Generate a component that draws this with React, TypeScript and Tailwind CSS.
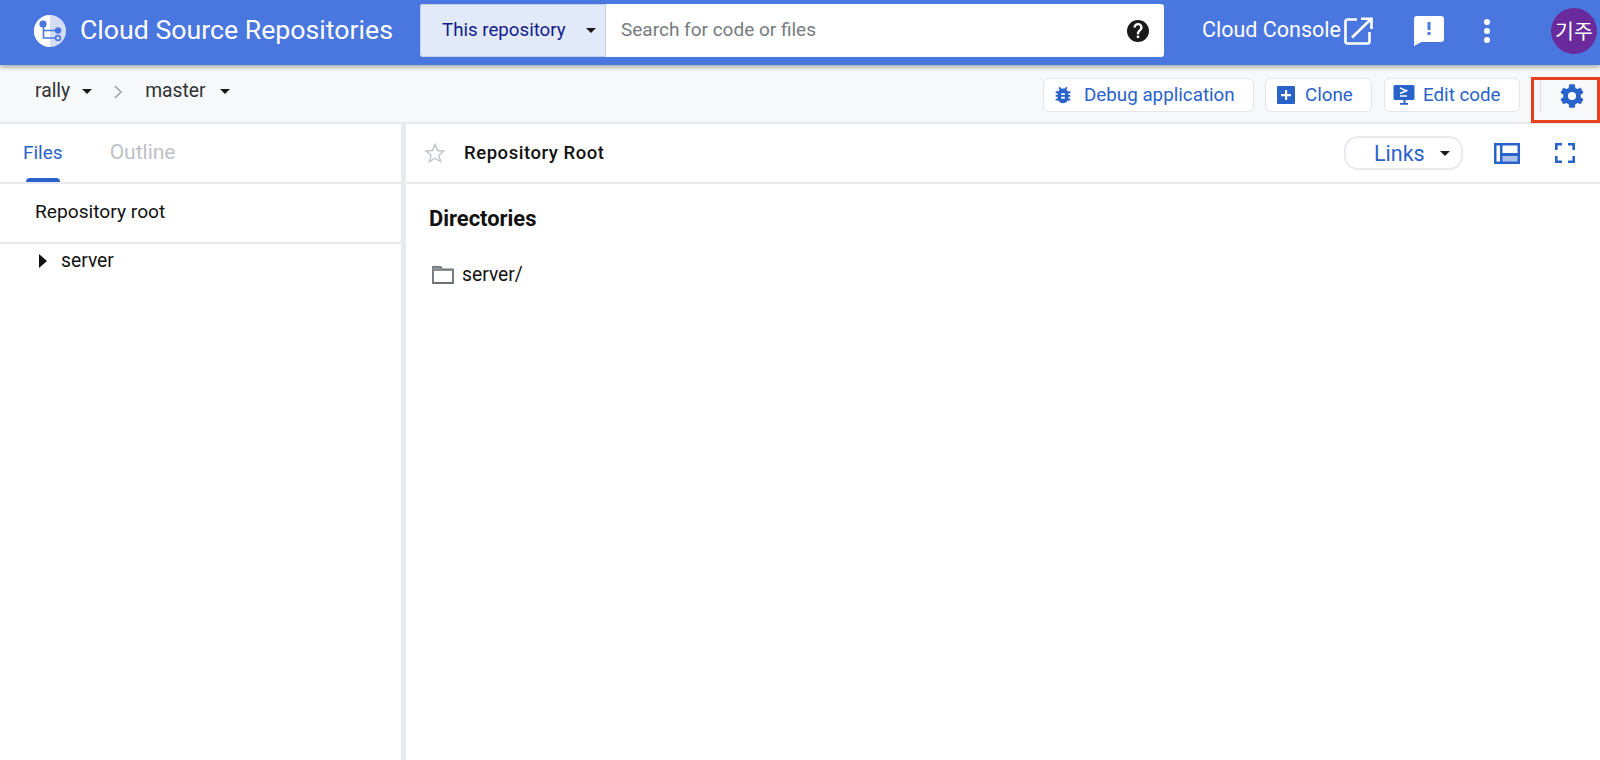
import React from "react";

const Caret = ({ className = "" }: { className?: string }) => (
  <svg width="10" height="5" viewBox="0 0 10 5" className={className}>
    <path d="M0 0h10L5 5z" fill="currentColor" />
  </svg>
);

const Logo = () => (
  <svg width="32" height="32" viewBox="0 0 32 32" className="shrink-0">
    <circle cx="16" cy="16" r="16" fill="#d3ddf6" />
    <path d="M16 0a16 16 0 0 0 0 32z" fill="#ffffff" />
    <path d="M9.5 9v14h14M9.5 15.5h14" fill="none" stroke="#4a76e0" strokeWidth="1.6" />
    <circle cx="9" cy="9" r="3.6" fill="#4a76e0" />
    <circle cx="24" cy="15.5" r="3.2" fill="#4a76e0" />
    <circle cx="24" cy="23" r="2.4" fill="#d3ddf6" stroke="#4a76e0" strokeWidth="1.6" />
  </svg>
);

const Help = () => (
  <svg width="24" height="24" viewBox="0 0 24 24" className="shrink-0">
    <path fill="#1a1a1a" d="M12 1a11 11 0 1 0 0 22 11 11 0 0 0 0-22zm1.2 18h-2.4v-2.4h2.4V19zm2.4-7.9-1 1.1c-.9.8-1.4 1.5-1.4 3h-2.4v-.6c0-1.2.5-2.3 1.4-3.1l1.4-1.5c.4-.4.6-.9.6-1.5a2.2 2.2 0 0 0-4.4 0H7.4a4.6 4.6 0 0 1 9.2 0c0 1-.4 1.9-1 2.6z" />
  </svg>
);

const External = () => (
  <svg width="29" height="28" viewBox="0 0 29 28" className="shrink-0">
    <path d="M13 2.500H3.500a2 2 0 0 0-2 2v20a2 2 0 0 0 2 2h20a2 2 0 0 0 2-2V15" fill="none" stroke="#fff" strokeWidth="2.600" />
    <path d="M8 20.500 26 3M17 1.800h10.500V12" fill="none" stroke="#fff" strokeWidth="2.600" />
  </svg>
);

const Feedback = () => (
  <svg width="30" height="30" viewBox="0 0 30 30" className="shrink-0">
    <path fill="#fff" fillRule="evenodd" d="M3 0h24a3 3 0 0 1 3 3v20a3 3 0 0 1-3 3H7.500L0 30V3a3 3 0 0 1 3-3zm10.500 6v8h3V6zm0 10v3h3v-3z" />
  </svg>
);

const Dots = () => (
  <svg width="8" height="28" viewBox="0 0 8 28" className="shrink-0">
    <circle cx="4" cy="5" r="3" fill="#fff" />
    <circle cx="4" cy="14" r="3" fill="#fff" />
    <circle cx="4" cy="23" r="3" fill="#fff" />
  </svg>
);

const Bug = () => (
  <svg width="22" height="22" viewBox="0 0 24 24" className="shrink-0">
    <path fill="#2a62cc" d="M20 8h-2.810a5.985 5.985 0 0 0-1.820-1.960L17 4.410 15.590 3l-2.170 2.170a6 6 0 0 0-2.830 0L8.410 3 7 4.410l1.620 1.630C7.880 6.550 7.260 7.220 6.810 8H4v2h2.090c-.05.330-.09.660-.09 1v1H4v2h2v1c0 .340.040.670.090 1H4v2h2.810c1.040 1.790 2.970 3 5.190 3s4.150-1.210 5.190-3H20v-2h-2.090c.05-.330.090-.660.090-1v-1h2v-2h-2v-1c0-.340-.040-.670-.090-1H20V8zm-6 8h-4v-2h4v2zm0-4h-4v-2h4v2z" />
  </svg>
);

const PlusBox = () => (
  <svg width="20" height="20" viewBox="0 0 20 20" className="shrink-0">
    <path fill="#2a62cc" fillRule="evenodd" d="M2 1h16a1 1 0 0 1 1 1v16a1 1 0 0 1-1 1H2a1 1 0 0 1-1-1V2a1 1 0 0 1 1-1zm7 4v4H5v2.200h4V15h2.200v-3.800H15V9h-3.800V5z" />
  </svg>
);

const EditScreen = () => (
  <svg width="22" height="22" viewBox="0 0 22 22" className="shrink-0">
    <path fill="#2a62cc" fillRule="evenodd" d="M2 1h18a1.500 1.500 0 0 1 1.500 1.500v12A1.500 1.500 0 0 1 20 16h-7.500v3H15v1.800H7V19h3.500v-3H2A1.500 1.500 0 0 1 .5 14.500v-12A1.500 1.500 0 0 1 2 1z" />
    <path d="m7 4 6.500 2.800L7 9.500M7 12h7" fill="none" stroke="#fff" strokeWidth="1.500" />
  </svg>
);

const Gear = () => (
  <svg width="28" height="28" viewBox="0 0 24 24" className="shrink-0">
    <path fill="#2a62cc" d="M19.430 12.980c.040-.320.070-.640.070-.980s-.030-.660-.070-.980l2.110-1.650c.190-.150.240-.420.120-.640l-2-3.460c-.120-.220-.390-.300-.610-.220l-2.490 1c-.520-.400-1.080-.730-1.690-.980l-.380-2.650A.488.488 0 0 0 14 2h-4c-.250 0-.460.180-.490.420l-.380 2.650c-.610.250-1.170.590-1.690.980l-2.490-1a.566.566 0 0 0-.180-.030c-.170 0-.340.090-.430.250l-2 3.460c-.130.220-.070.490.120.640l2.110 1.650c-.040.320-.070.650-.070.980s.030.660.070.980l-2.110 1.650c-.190.150-.240.420-.120.640l2 3.460c.120.220.390.300.610.220l2.490-1c.520.400 1.080.730 1.690.980l.380 2.650c.030.240.240.420.490.420h4c.250 0 .460-.180.490-.420l.380-2.650c.610-.250 1.170-.590 1.690-.980l2.490 1c.060.020.120.030.180.030.170 0 .340-.090.430-.250l2-3.460c.120-.220.070-.490-.120-.640l-2.110-1.650zM12 15.500a3.500 3.500 0 1 1 0-7 3.500 3.500 0 0 1 0 7z" />
  </svg>
);

const Star = () => (
  <svg width="24" height="24" viewBox="0 0 24 24" className="shrink-0">
    <path fill="none" stroke="#bfc3c9" strokeWidth="1.400" d="m12 3.500 2.500 6 6.500.5-5 4.300 1.600 6.300L12 17.200l-5.600 3.400L8 14.300 3 10l6.500-.5z" />
  </svg>
);

const LayoutIcon = () => (
  <svg width="26" height="21" viewBox="0 0 26 21" className="shrink-0">
    <rect x="0" y="0" width="26" height="21" fill="#2a62cc" />
    <rect x="2.500" y="2.500" width="3.500" height="16" fill="#fff" />
    <rect x="8.500" y="2.500" width="15" height="7.500" fill="#fff" />
    <rect x="8.500" y="13" width="15" height="5.500" fill="#a9c0ea" />
  </svg>
);

const Fullscreen = () => (
  <svg width="20" height="20" viewBox="0 0 20 20" className="shrink-0">
    <path d="M1.300 7V1.300H7M13 1.300h5.700V7M18.700 13v5.700H13M7 18.700H1.300V13" fill="none" stroke="#2a62cc" strokeWidth="2.600" />
  </svg>
);

const Folder = () => (
  <svg width="22" height="18" viewBox="0 0 22 18" className="shrink-0">
    <path d="M1 1h7.500l2 2.500H21V17H1z" fill="none" stroke="#6b6f74" strokeWidth="1.800" />
    <path d="M1 1h7.500l2 2.500H21V5H1z" fill="#8a8d91" />
  </svg>
);

const ActionButton = ({ icon, label, className }: { icon: React.ReactNode; label: string; className: string }) => (
  <button className={`flex h-[34px] items-center rounded-[6px] border border-[#e3e5e8] bg-white text-[18.800px] text-[#2a62cc] ${className}`}>
    {icon}
    <span>{label}</span>
  </button>
);

export default function App() {
  return (
    <div className="flex h-[760px] w-[1600px] flex-col overflow-hidden bg-white font-['Roboto',sans-serif] text-[#111111]">
      <header className="relative z-10 flex h-[65px] shrink-0 items-center bg-[#4a76e0] pb-[4px] shadow-[0_2px_5px_rgba(0,0,0,0.35)]">
        <div className="ml-[34px] flex w-[386px] items-center">
          <Logo />
          <span className="ml-[14px] text-[26.700px] leading-none text-white">Cloud Source Repositories</span>
        </div>
        <div className="flex h-[53px] w-[744px] items-center rounded-[3px] bg-white">
          <div className="flex h-full w-[186px] items-center rounded-l-[3px] border border-[#c3cfea] bg-[#e2e9f9] pl-[21px] text-[#12208f]">
            <span className="text-[18.700px]">This repository</span>
            <Caret className="ml-[20px] text-[#1a1a1a]" />
          </div>
          <span className="ml-[15px] flex-1 text-[19px] text-[#777b80]">Search for code or files</span>
          <div className="mr-[14px]"><Help /></div>
        </div>
        <span className="ml-[38px] text-[21.500px] text-white">Cloud Console</span>
        <div className="ml-[3px]"><External /></div>
        <div className="ml-[41px]"><Feedback /></div>
        <div className="ml-[39px]"><Dots /></div>
        <div className="ml-[60px] flex h-[46px] w-[46px] items-center justify-center rounded-full bg-[#6a2a9b] font-['Noto_Sans_CJK_KR',sans-serif] text-[20.500px] text-white">기주</div>
      </header>

      <div className="flex h-[59px] shrink-0 items-stretch border-b-2 border-[#e8eaed] bg-[#f7f8fa]">
        <div className="flex flex-1 items-center pb-[4px] pl-[35px] text-[19.300px] text-[#303134]">
          <span>rally</span>
          <Caret className="ml-[12px] text-[#1a1a1a]" />
          <svg width="10" height="16" viewBox="0 0 10 16" className="ml-[21px]">
            <path d="m2 2 6 6-6 6" fill="none" stroke="#9aa0a6" strokeWidth="1.500" />
          </svg>
          <span className="ml-[22px]">master</span>
          <Caret className="ml-[14px] text-[#1a1a1a]" />
        </div>
        <div className="flex items-start pt-[13px]">
          <ActionButton className="w-[211px] gap-[10px] pl-[8px]" icon={<Bug />} label="Debug application" />
        </div>
        <div className="ml-[11px] flex items-start pt-[13px]">
          <ActionButton className="w-[107px] gap-[9px] pl-[10px]" icon={<PlusBox />} label="Clone" />
        </div>
        <div className="ml-[12px] flex items-start pt-[13px]">
          <ActionButton className="w-[136px] gap-[8px] pl-[8px]" icon={<EditScreen />} label="Edit code" />
        </div>
        <div className="ml-[11px] mt-[12px] flex h-[46px] w-[69px] items-center border-[3px] border-[#e8401f] pb-[8px] pl-[6px]">
          <div className="h-[32px] w-px bg-[#dadce0]" />
          <div className="ml-[17px]"><Gear /></div>
        </div>
      </div>

      <main className="flex min-h-0 flex-1">
        <aside className="box-content flex w-[401px] shrink-0 flex-col border-r-[5px] border-[#e8eaed]">
          <div className="flex h-[60px] shrink-0 border-b-2 border-[#e8eaed] pl-[23px]">
            <div className="relative flex h-full items-center text-[19px] text-[#2a62cc]">
              Files
              <div className="absolute bottom-0 left-[3px] h-[4px] w-[34px] rounded-t-[4px] bg-[#2a62cc]" />
            </div>
            <div className="ml-[47px] flex h-full items-center text-[21px] text-[#bdc1c6]">Outline</div>
          </div>
          <div className="flex h-[60px] shrink-0 items-center border-b-2 border-[#e8eaed] pb-[1px] pl-[35px] text-[19.200px]">Repository root</div>
          <div className="mt-[3px] flex items-center pl-[39px] text-[19.300px]">
            <svg width="8" height="14" viewBox="0 0 8 14"><path d="M0 0v14l8-7z" fill="#111" /></svg>
            <span className="ml-[14px]">server</span>
          </div>
        </aside>
        <section className="flex min-w-0 flex-1 flex-col">
          <div className="flex h-[60px] shrink-0 items-center border-b-2 border-[#e8eaed] pl-[17px]">
            <Star />
            <span className="ml-[17px] flex-1 pt-[2px] text-[18.500px] font-medium tracking-[0.55px]">Repository Root</span>
            <button className="flex h-[34px] w-[119px] items-center rounded-[14px] border-2 border-[#e8eaed] pl-[28px] text-[21.500px] text-[#2a62cc]">
              <span className="pt-[2px]">Links</span>
              <Caret className="ml-[15px] text-[#1a1a1a]" />
            </button>
            <div className="ml-[31px]"><LayoutIcon /></div>
            <div className="ml-[35px] mr-[25px]"><Fullscreen /></div>
          </div>
          <div className="pl-[23px]">
            <h2 className="mt-[21px] text-[21.900px] font-bold leading-[28px]">Directories</h2>
            <div className="mt-[28px] flex items-center pl-[3px] text-[19.300px]">
              <Folder />
              <span className="ml-[8px]">server/</span>
            </div>
          </div>
        </section>
      </main>
    </div>
  );
}
